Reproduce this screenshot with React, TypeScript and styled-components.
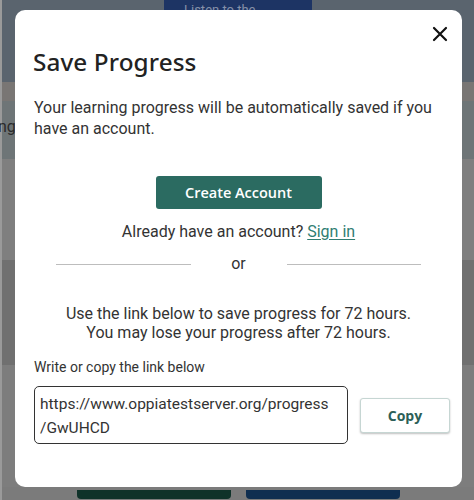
import React from "react";
import styled, { createGlobalStyle } from "styled-components";

const Global = createGlobalStyle`
  html, body { margin: 0; padding: 0; }
  body { width: 474px; height: 500px; overflow: hidden; font-family: Roboto, "Liberation Sans", sans-serif; }
`;

const Page = styled.div`
  position: relative;
  width: 474px;
  height: 500px;
  overflow: hidden;
  background: #7b7b7b;
`;

const Backdrop = styled.div`
  display: flex;
  flex-direction: column;
  height: 100%;
  border-left: 2px solid #9a9a9a;
  box-sizing: border-box;
`;

const Band = styled.div<{ $h: number; $bg: string }>`
  height: ${(p) => p.$h}px;
  background: ${(p) => p.$bg};
  flex: none;
  display: flex;
  align-items: center;
  justify-content: center;
  position: relative;
`;

const TopButton = styled.div`
  width: 148px;
  height: 40px;
  margin-top: -6px;
  align-self: flex-start;
  background: #1d3464;
  color: #8590a8;
  font-size: 13px;
  padding: 8px 0 0 20px;
  box-sizing: border-box;
  overflow: hidden;
`;

const SideText = styled.span`
  position: absolute;
  left: -4px;
  top: 16px;
  font-size: 16px;
  color: #2a2a2a;
`;

const BottomRow = styled.div`
  display: flex;
  gap: 15px;
  padding-left: 75px;
  margin-top: 3px;
`;

const BottomButton = styled.div<{ $bg: string }>`
  width: 154px;
  height: 9px;
  background: ${(p) => p.$bg};
  border-radius: 0 0 4px 4px;
`;

const Modal = styled.div`
  position: absolute;
  left: 15px;
  top: 10px;
  width: 447px;
  height: 477px;
  background: #fff;
  border-radius: 10px;
  box-sizing: border-box;
  padding: 14px 12px 0 19px;
  display: flex;
  flex-direction: column;
  color: #333;
`;

const CloseRow = styled.div`
  display: flex;
  justify-content: flex-end;
  height: 20px;
`;

const CloseBtn = styled.button`
  border: 0;
  background: none;
  padding: 0;
  width: 20px;
  height: 20px;
  display: flex;
  align-items: center;
  justify-content: center;
  cursor: pointer;
`;

const Title = styled.h1`
  margin: 1px 0 0 -1px;
  font-family: "Noto Sans", "Open Sans", sans-serif;
  font-weight: 500;
  font-size: 24.3px;
  line-height: 34px;
  color: #222;
  letter-spacing: 0.1px;
`;

const Intro = styled.p`
  margin: 18px 0 0 0;
  font-size: 16px;
  line-height: 21px;
  color: #333;
`;

const Center = styled.div`
  display: flex;
  flex-direction: column;
  align-items: center;
  margin-right: 7px;
`;

const PrimaryButton = styled.button`
  margin-top: 37px;
  width: 166px;
  height: 33px;
  border: 0;
  border-radius: 3px;
  background: #2b6b61;
  color: #fff;
  font-family: "Open Sans", "Noto Sans", sans-serif;
  font-weight: 600;
  font-size: 14.5px;
  cursor: pointer;
`;

const Already = styled.p`
  margin: 12px 0 0 0;
  font-size: 16px;
  line-height: 22px;
  color: #333;
`;

const SignIn = styled.a`
  color: #2f7d72;
  text-decoration: underline;
  text-underline-offset: 2px;
`;

const Divider = styled.div`
  margin-top: 10px;
  display: flex;
  align-items: center;
  width: 365px;
  font-size: 16px;
  color: #333;
`;

const Rule = styled.span`
  flex: 1;
  height: 1px;
  background: #bdbdbd;
`;

const OrText = styled.span`
  width: 96px;
  text-align: center;
  line-height: 22px;
`;

const Notice = styled.p`
  margin: 29px 0 0 0;
  text-align: center;
  font-size: 16px;
  line-height: 19px;
  color: #333;
`;

const Label = styled.div`
  margin-top: 16px;
  font-size: 14px;
  line-height: 18px;
  color: #333;
`;

const LinkRow = styled.div`
  margin-top: 10px;
  display: flex;
  align-items: center;
  gap: 12px;
`;

const LinkBox = styled.div`
  width: 314px;
  height: 58px;
  box-sizing: border-box;
  border: 1.5px solid #333;
  border-radius: 5px;
  padding: 5px 0 0 5px;
  font-size: 15.5px;
  line-height: 24px;
  color: #333;
`;

const CopyButton = styled.button`
  width: 90px;
  height: 35px;
  background: #fff;
  border: 1px solid #c6d6d3;
  border-radius: 3px;
  box-shadow: 0 1px 2px rgba(0, 0, 0, 0.25);
  color: #2c5f58;
  font-family: "Open Sans", "Noto Sans", sans-serif;
  font-weight: 700;
  font-size: 14px;
  cursor: pointer;
`;

export default function App() {
  return (
    <>
      <Global />
      <Page>
        <Backdrop>
          <Band $h={82} $bg="#5a646e">
            <TopButton>Listen to the</TopButton>
          </Band>
          <Band $h={19} $bg="#797674" />
          <Band $h={58} $bg="#6e7577">
            <SideText>ng</SideText>
          </Band>
          <Band $h={101} $bg="#7f7f7f" />
          <Band $h={105} $bg="#707070" />
          <Band $h={122} $bg="#7d7d7d" />
          <BottomRow>
            <BottomButton $bg="#0f3229" />
            <BottomButton $bg="#0f2e50" />
          </BottomRow>
        </Backdrop>
        <Modal>
          <CloseRow>
            <CloseBtn aria-label="Close">
              <svg width="16" height="16" viewBox="0 0 16 16">
                <path d="M2 2 L14 14 M14 2 L2 14" stroke="#111" strokeWidth="2.2" strokeLinecap="round" />
              </svg>
            </CloseBtn>
          </CloseRow>
          <Title>Save Progress</Title>
          <Intro>
            Your learning progress will be automatically saved if you have an account.
          </Intro>
          <Center>
            <PrimaryButton>Create Account</PrimaryButton>
            <Already>
              Already have an account? <SignIn href="#">Sign in</SignIn>
            </Already>
            <Divider>
              <Rule />
              <OrText>or</OrText>
              <Rule />
            </Divider>
            <Notice>
              Use the link below to save progress for 72 hours.
              <br />
              You may lose your progress after 72 hours.
            </Notice>
          </Center>
          <Label>Write or copy the link below</Label>
          <LinkRow>
            <LinkBox>
              https://www.oppiatestserver.org/progress<wbr />/GwUHCD
            </LinkBox>
            <CopyButton>Copy</CopyButton>
          </LinkRow>
        </Modal>
      </Page>
    </>
  );
}
